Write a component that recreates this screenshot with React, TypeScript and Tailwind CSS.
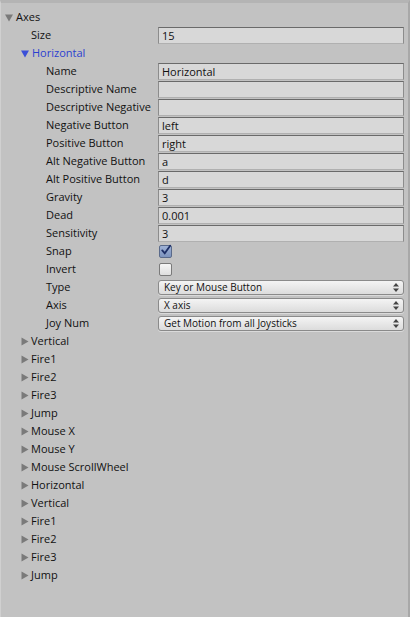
import React from "react";

const font = { fontFamily: '"Open Sans", "DejaVu Sans", sans-serif' };

function Tri({ open, color = "#7a7a7a" }: { open?: boolean; color?: string }) {
  return (
    <svg width="8" height="9" viewBox="0 0 8 9" className="shrink-0">
      {open ? (
        <polygon points="0,1.5 8,1.5 4,8.5" fill={color} />
      ) : (
        <polygon points="0.5,0.5 7.5,4.5 0.5,8.5" fill={color} />
      )}
    </svg>
  );
}

function Field({ value }: { value: string }) {
  return (
    <div className="h-[17px] flex-1 border border-t-[#6a6a6a] border-l-[#8c8c8c] border-r-[#8c8c8c] border-b-[#b0b0b0] bg-[#d8d8d8] px-[3px] text-[11px] leading-[15px] text-[#111]">
      {value}
    </div>
  );
}

function Drop({ value }: { value: string }) {
  return (
    <div className="flex h-[15px] flex-1 items-center justify-between rounded-[3px] border border-[#8a8a8a] bg-gradient-to-b from-[#f4f4f4] to-[#dcdcdc] pl-[5px] pr-[4px] text-[10px] text-[#111] shadow-[0_1px_0_rgba(255,255,255,0.4)]">
      <span className="leading-[13px]">{value}</span>
      <svg width="6" height="9" viewBox="0 0 6 9">
        <polygon points="3,0 6,3.5 0,3.5" fill="#444" />
        <polygon points="3,9 6,5.5 0,5.5" fill="#444" />
      </svg>
    </div>
  );
}

function Row({ label, children }: { label: string; children?: React.ReactNode }) {
  return (
    <div className="flex h-[18px] items-center">
      <div className="w-[158px] shrink-0 pl-[46px] text-[11px] text-[#111]">{label}</div>
      <div className="flex flex-1 items-center pr-[6px]">{children}</div>
    </div>
  );
}

function Check({ on }: { on?: boolean }) {
  return on ? (
    <div className="ml-[1px] flex h-[13px] w-[13px] items-center justify-center rounded-[2px] border border-[#5a6a8a] bg-gradient-to-b from-[#9fb2d6] to-[#7d93bd]">
      <svg width="12" height="12" viewBox="0 0 12 12" className="-mt-[2px] ml-[1px]">
        <path d="M1.5 6.5 L4.5 10 L11 1" stroke="#1e2f66" strokeWidth="2.2" fill="none" strokeLinecap="round" />
      </svg>
    </div>
  ) : (
    <div className="ml-[1px] h-[13px] w-[13px] rounded-[2px] border border-[#7a7a7a] bg-gradient-to-b from-[#f6f6f6] to-[#dedede]" />
  );
}

function Collapsed({ label }: { label: string }) {
  return (
    <div className="flex h-[18px] items-center gap-[2px] pl-[20px] text-[11px] text-[#111]">
      <Tri />
      <span>{label}</span>
    </div>
  );
}

export default function App() {
  const fields: [string, string][] = [
    ["Name", "Horizontal"],
    ["Descriptive Name", ""],
    ["Descriptive Negative", ""],
    ["Negative Button", "left"],
    ["Positive Button", "right"],
    ["Alt Negative Button", "a"],
    ["Alt Positive Button", "d"],
    ["Gravity", "3"],
    ["Dead", "0.001"],
    ["Sensitivity", "3"],
  ];
  const collapsed = [
    "Vertical",
    "Fire1",
    "Fire2",
    "Fire3",
    "Jump",
    "Mouse X",
    "Mouse Y",
    "Mouse ScrollWheel",
    "Horizontal",
    "Vertical",
    "Fire1",
    "Fire2",
    "Fire3",
    "Jump",
  ];
  return (
    <div style={font} className="h-[617px] w-[410px] overflow-hidden bg-[#c2c2c2]">
      <div className="h-[617px] border-l border-r-2 border-t-[3px] border-l-[#d0d0d0] border-r-[#a8a8a8] border-t-[#b4b4b4] pt-[5px]">
        <div className="flex h-[18px] items-center gap-[3px] pl-[4px] text-[11px] text-[#111]">
          <Tri open />
          <span>Axes</span>
        </div>
        <div className="flex h-[18px] items-center">
          <div className="w-[157px] shrink-0 pl-[30px] text-[11px] text-[#111]">Size</div>
          <div className="flex flex-1 pr-[4px]">
            <Field value="15" />
          </div>
        </div>
        <div className="flex h-[18px] items-center gap-[3px] pl-[20px] text-[11px] text-[#2b3fd0]">
          <Tri open color="#3b50d8" />
          <span>Horizontal</span>
        </div>
        {fields.map(([l, v]) => (
          <div key={l} className="flex h-[18px] items-center">
            <div className="w-[157px] shrink-0 pl-[45px] text-[11px] text-[#111]">{l}</div>
            <div className="flex flex-1 pr-[4px]">
              <Field value={v} />
            </div>
          </div>
        ))}
        <div className="flex h-[18px] items-center">
          <div className="w-[157px] shrink-0 pl-[45px] text-[11px] text-[#111]">Snap</div>
          <Check on />
        </div>
        <div className="flex h-[18px] items-center">
          <div className="w-[157px] shrink-0 pl-[45px] text-[11px] text-[#111]">Invert</div>
          <Check />
        </div>
        {[
          ["Type", "Key or Mouse Button"],
          ["Axis", "X axis"],
          ["Joy Num", "Get Motion from all Joysticks"],
        ].map(([l, v]) => (
          <div key={l} className="flex h-[18px] items-center">
            <div className="w-[157px] shrink-0 pl-[45px] text-[11px] text-[#111]">{l}</div>
            <div className="flex flex-1 pr-[4px]">
              <Drop value={v} />
            </div>
          </div>
        ))}
        {collapsed.map((c, i) => (
          <Collapsed key={i} label={c} />
        ))}
      </div>
    </div>
  );
}
